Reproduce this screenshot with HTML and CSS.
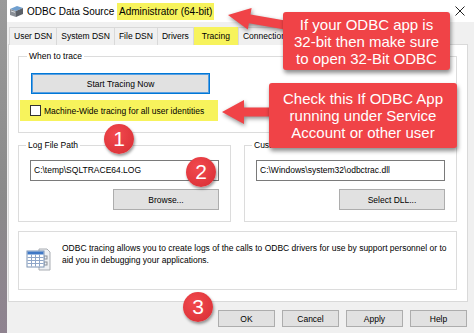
FILE: index.html
```html
<!DOCTYPE html>
<html lang="en">
<head>
  <meta charset="UTF-8">
  <meta name="viewport" content="width=device-width, initial-scale=1.0">
  <title>ODBC Data Source Administrator (64-bit)</title>
  <link rel="stylesheet" href="styles.css">
</head>
<body>
  <div class="desk">
    <div class="strip"></div>
    <div class="window">
      <div class="titlebar">
        <svg class="app-icon" width="15" height="13" viewBox="0 0 15 13">
          <path d="M1 4 L8 1 L14 3 L7 6 Z" fill="#6f9fcf"/>
          <path d="M1 4 L7 6 L7 12 L1 10 Z" fill="#8a8f96"/>
          <path d="M7 6 L14 3 L14 9 L7 12 Z" fill="#5b6068"/>
          <path d="M2 6 L6 7.3" stroke="#d6dbe0" stroke-width="1"/>
        </svg>
        <span class="title">ODBC Data Source <span class="hl">Administrator (64-bit)</span></span>
        <svg class="close" width="10" height="10" viewBox="0 0 10 10">
          <path d="M0.5 0.5 L9.5 9.5 M9.5 0.5 L0.5 9.5" stroke="#222" stroke-width="1"/>
        </svg>
      </div>

      <div class="tabs">
        <span class="tab">User DSN</span>
        <span class="tab">System DSN</span>
        <span class="tab">File DSN</span>
        <span class="tab">Drivers</span>
        <span class="tab active">Tracing</span>
        <span class="tab">Connection Pooling</span>
      </div>

      <div class="page">
        <fieldset class="group when">
          <legend>When to trace</legend>
          <button class="btn primary">Start Tracing Now</button>
          <label class="check-row">
            <span class="checkbox"></span>
            Machine-Wide tracing for all user identities
          </label>
        </fieldset>

        <div class="pair">
          <fieldset class="group">
            <legend>Log File Path</legend>
            <div class="textbox">C:\temp\SQLTRACE64.LOG</div>
            <div class="btn-line"><button class="btn wide">Browse...</button></div>
          </fieldset>
          <fieldset class="group">
            <legend>Custom Trace DLL</legend>
            <div class="textbox">C:\Windows\system32\odbctrac.dll</div>
            <div class="btn-line"><button class="btn wide">Select DLL...</button></div>
          </fieldset>
        </div>

        <div class="group info">
          <svg class="info-icon" width="25" height="25" viewBox="0 0 25 25">
            <path d="M13 3 H21 L24 6 V24 H13 Z" fill="#eef0f3" stroke="#a9adb3"/>
            <rect x="18" y="10" width="3" height="3" fill="none" stroke="#8a9099"/>
            <rect x="18" y="16" width="3" height="3" fill="none" stroke="#8a9099"/>
            <rect x="1" y="5" width="17" height="16" fill="#fff" stroke="#7d93b3"/>
            <rect x="1.5" y="5.5" width="16" height="3" fill="#3f78c6"/>
            <path d="M1.5 11.5 H17.5 M1.5 14.5 H17.5 M1.5 17.5 H17.5 M5.5 8.5 V20.5 M9.5 8.5 V20.5 M13.5 8.5 V20.5" stroke="#8fa6c8" stroke-width="1"/>
          </svg>
          <p class="info-text">ODBC tracing allows you to create logs of the calls to ODBC drivers for use by support personnel or to<br>aid you in debugging your applications.</p>
        </div>
      </div>

      <div class="actions">
        <button class="btn act">OK</button>
        <button class="btn act">Cancel</button>
        <button class="btn act">Apply</button>
        <button class="btn act">Help</button>
      </div>
    </div>
  </div>

  <!-- annotations drawn on top of the screenshot -->
  <svg class="arrows" width="474" height="333" viewBox="0 0 474 333">
    <polygon points="228,15 251.6,8 250.5,14.4 288,21 286.3,29.8 248.9,23.2 247.8,29.6" fill="#f04347"/>
    <polygon points="222,112 244,100 244,107.5 273,107.5 273,116.5 244,116.5 244,124" fill="#f04347"/>
  </svg>
  <div class="callout c1">If your ODBC app is<br>32-bit then make sure<br>to open 32-Bit ODBC</div>
  <div class="callout c2">Check this If ODBC App<br>running under Service<br>Account or other user</div>
  <div class="badge b1">1</div>
  <div class="badge b2">2</div>
  <div class="badge b3">3</div>
</body>
</html>
```

FILE: styles.css
```css
body {
  margin: 0;
  width: 474px;
  height: 333px;
  overflow: hidden;
  position: relative;
  font-family: "Liberation Sans", Arial, sans-serif;
  font-size: 8.5px;
  color: #000;
}
.desk {
  display: flex;
  height: 333px;
}
.strip {
  width: 7px;
  background: linear-gradient(#9a9a9a, #8a8a8a 60%, #8f8390);
}
.window {
  flex: 1;
  background: #f0f0f0;
  display: flex;
  flex-direction: column;
  padding-left: 1px;
  min-width: 0;
}

/* title bar */
.titlebar {
  height: 22px;
  background: #fff;
  display: flex;
  align-items: center;
  padding-left: 2px;
  margin-left: -1px;
}
.app-icon {
  margin-right: 3px;
}
.title {
  font-size: 10px;
  white-space: nowrap;
}
.hl {
  background: #f7f35c;
  padding: 3px 2px;
}
.close {
  margin-left: auto;
  margin-right: 9px;
}

/* tabs - the rest of the row sits under the first callout */
.tabs {
  display: flex;
  margin-top: 5px;
  padding-left: 1px;
  width: 275px;
  height: 18px;
  white-space: nowrap;
  overflow: hidden;
  position: relative;
  z-index: 1;
}
.tab {
  padding: 0 4px;
  line-height: 17px;
  border: 1px solid #d9d9d9;
  border-bottom: none;
  margin-right: -1px;
  background: #f0f0f0;
}
.tab.active {
  background: #f7f35c;
  border-color: #f7f35c;
  padding: 0 7px;
  margin: -2px 0 0 1px;
  line-height: 21px;
  height: 22px;
}

/* tab page */
.page {
  width: 460px;
  height: 258px;
  box-sizing: border-box;
  margin-top: -1px;
  background: #fff;
  border: 1px solid #d9d9d9;
  padding: 5px 10px 0 9px;
}
.group {
  margin: 0;
  border: 1px solid #dcdcdc;
  padding: 9px 11px 11px 11px;
  min-width: 0;
}
.group legend {
  padding: 0 2px;
  margin-left: -4px;
  line-height: 12px;
}
.when {
  padding-top: 11px;
  padding-left: 12px;
}
.btn {
  font-family: inherit;
  font-size: 8.5px;
  background: #e1e1e1;
  border: 1px solid #adadad;
  padding: 0;
  height: 21px;
  color: #000;
}
.btn.primary {
  display: block;
  width: 179px;
  border-color: #0078d7;
  box-shadow: inset 0 0 0 1px #5a9fe0;
}
.check-row {
  display: flex;
  align-items: center;
  gap: 3px;
  width: 198px;
  height: 21px;
  margin: 6px 0 0 -11px;
  padding-left: 10px;
  box-sizing: border-box;
  background: #f7f35c;
  white-space: nowrap;
}
.checkbox {
  width: 9px;
  height: 9px;
  border: 1px solid #333;
  background: #fff;
}
.pair {
  display: grid;
  grid-template-columns: 1fr 1fr;
  gap: 13px;
  margin-top: 6px;
}
.textbox {
  height: 21px;
  box-sizing: border-box;
  border: 1px solid #7a7a7a;
  background: #fff;
  padding-left: 3px;
  line-height: 19px;
  white-space: nowrap;
}
.btn-line {
  display: flex;
  justify-content: flex-end;
  margin-top: 8px;
}
.btn.wide {
  width: 106px;
}
.info {
  margin-top: 9px;
  height: 59px;
  box-sizing: border-box;
  display: flex;
  align-items: flex-start;
  padding: 14px 7px 0 7px;
  gap: 11px;
}
.info-text {
  margin: -4px 0 0;
  font-size: 8.5px;
  line-height: 12px;
  white-space: nowrap;
}

/* dialog buttons */
.actions {
  display: flex;
  justify-content: flex-end;
  gap: 7px;
  margin-top: 8px;
  padding-right: 7px;
}
.btn.act {
  width: 57px;
  height: 17px;
}

/* annotations */
.arrows {
  position: absolute;
  left: 0;
  top: 0;
  z-index: 5;
  filter: drop-shadow(1px 2px 2px rgba(0, 0, 0, 0.45));
}
.callout {
  position: absolute;
  z-index: 6;
  background: #f04347;
  color: #fff;
  border-radius: 3px;
  font-size: 15px;
  line-height: 17px;
  text-align: center;
  box-shadow: 1px 3px 4px rgba(0, 0, 0, 0.45);
  box-sizing: border-box;
  padding-top: 4px;
  white-space: nowrap;
}
.c1 {
  left: 283px;
  top: 12px;
  width: 167px;
  height: 58px;
}
.c2 {
  left: 269px;
  top: 83px;
  width: 188px;
  height: 65px;
  padding-top: 7px;
}
.badge {
  position: absolute;
  z-index: 6;
  width: 30px;
  height: 30px;
  border-radius: 50%;
  background: radial-gradient(circle at 40% 35%, #f2494e, #d62d33);
  box-shadow: 1px 2px 3px rgba(0, 0, 0, 0.4);
  color: #fff;
  font-size: 21px;
  line-height: 30px;
  text-align: center;
}
.b1 { left: 104px; top: 124px; }
.b2 { left: 186px; top: 157px; }
.b3 { left: 183px; top: 292px; }
```
